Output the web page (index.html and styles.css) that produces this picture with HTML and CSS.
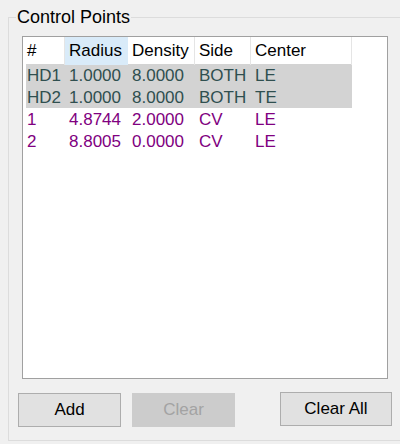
FILE: index.html
```html
<!DOCTYPE html>
<html lang="en">
<head>
    <meta charset="UTF-8">
    <title>Control Points</title>
    <link rel="stylesheet" href="styles.css">
</head>
<body>
    <div class="group">
        <div class="title">Control Points</div>

        <div class="list">
            <div class="row header">
                <span>#</span>
                <span class="hot">Radius</span>
                <span>Density</span>
                <span>Side</span>
                <span>Center</span>
            </div>
            <div class="row fixed">
                <span>HD1</span><span>1.0000</span><span>8.0000</span><span>BOTH</span><span>LE</span>
            </div>
            <div class="row fixed">
                <span>HD2</span><span>1.0000</span><span>8.0000</span><span>BOTH</span><span>TE</span>
            </div>
            <div class="row user">
                <span>1</span><span>4.8744</span><span>2.0000</span><span>CV</span><span>LE</span>
            </div>
            <div class="row user">
                <span>2</span><span>8.8005</span><span>0.0000</span><span>CV</span><span>LE</span>
            </div>
        </div>

        <div class="buttons">
            <button class="add">Add</button>
            <button class="clear" disabled>Clear</button>
            <button class="clear-all">Clear All</button>
        </div>
    </div>
</body>
</html>
```
FILE: styles.css
```css
* {
    margin: 0;
    padding: 0;
    box-sizing: border-box;
}

body {
    background: #f0f0f0;
    font-family: 'Liberation Sans', Arial, sans-serif;
    width: 400px;
    height: 444px;
    overflow: hidden;
}

.group {
    margin: 17px 0 0 8px;
    height: 424px;
    border: 1px solid #dcdcdc;
    border-right: none;
}

.title {
    display: block;
    width: max-content;
    margin: -11px 0 0 7px;
    padding: 0 1px;
    background: #f0f0f0;
    font-size: 18px;
    line-height: 21px;
    color: #000;
}

.list {
    margin: 8px 0 0 13px;
    width: 366px;
    height: 343px;
    background: #fff;
    border: 1px solid #a0a0a0;
    font-size: 17px;
}

.row {
    display: grid;
    grid-template-columns: 42px 63px 67px 56px 101px;
    height: 22px;
    line-height: 22px;
}

.row span {
    padding-left: 4px;
    white-space: nowrap;
}

.header {
    height: 27px;
    line-height: 28px;
    color: #000;
}

.header span {
    border-right: 1px solid #e5e5e5;
}

.header .hot {
    background: #d9ebf9;
    border-right-color: #d9ebf9;
}

.fixed,
.user {
    margin-left: 3px;
    grid-template-columns: 39px 63px 67px 56px 101px;
    width: 326px;
    line-height: 24px;
}

.fixed {
    background: #d3d3d3;
    color: #2f4f4f;
}

.user {
    color: #800080;
}

.fixed span:first-child,
.user span:first-child {
    padding-left: 1px;
}

.buttons {
    display: flex;
    align-items: flex-start;
    margin: 14px 0 0 9px;
}

button {
    font-family: 'Liberation Sans', Arial, sans-serif;
    font-size: 17px;
    background: #e1e1e1;
    border: 1px solid #adadad;
    color: #000;
    height: 34px;
}

.add {
    width: 103px;
}

.clear {
    margin-left: 11px;
    width: 103px;
    background: #cccccc;
    border-color: #cccccc;
    color: #a3a3a3;
}

.clear-all {
    margin: -1px 0 0 45px;
    width: 112px;
}
```
